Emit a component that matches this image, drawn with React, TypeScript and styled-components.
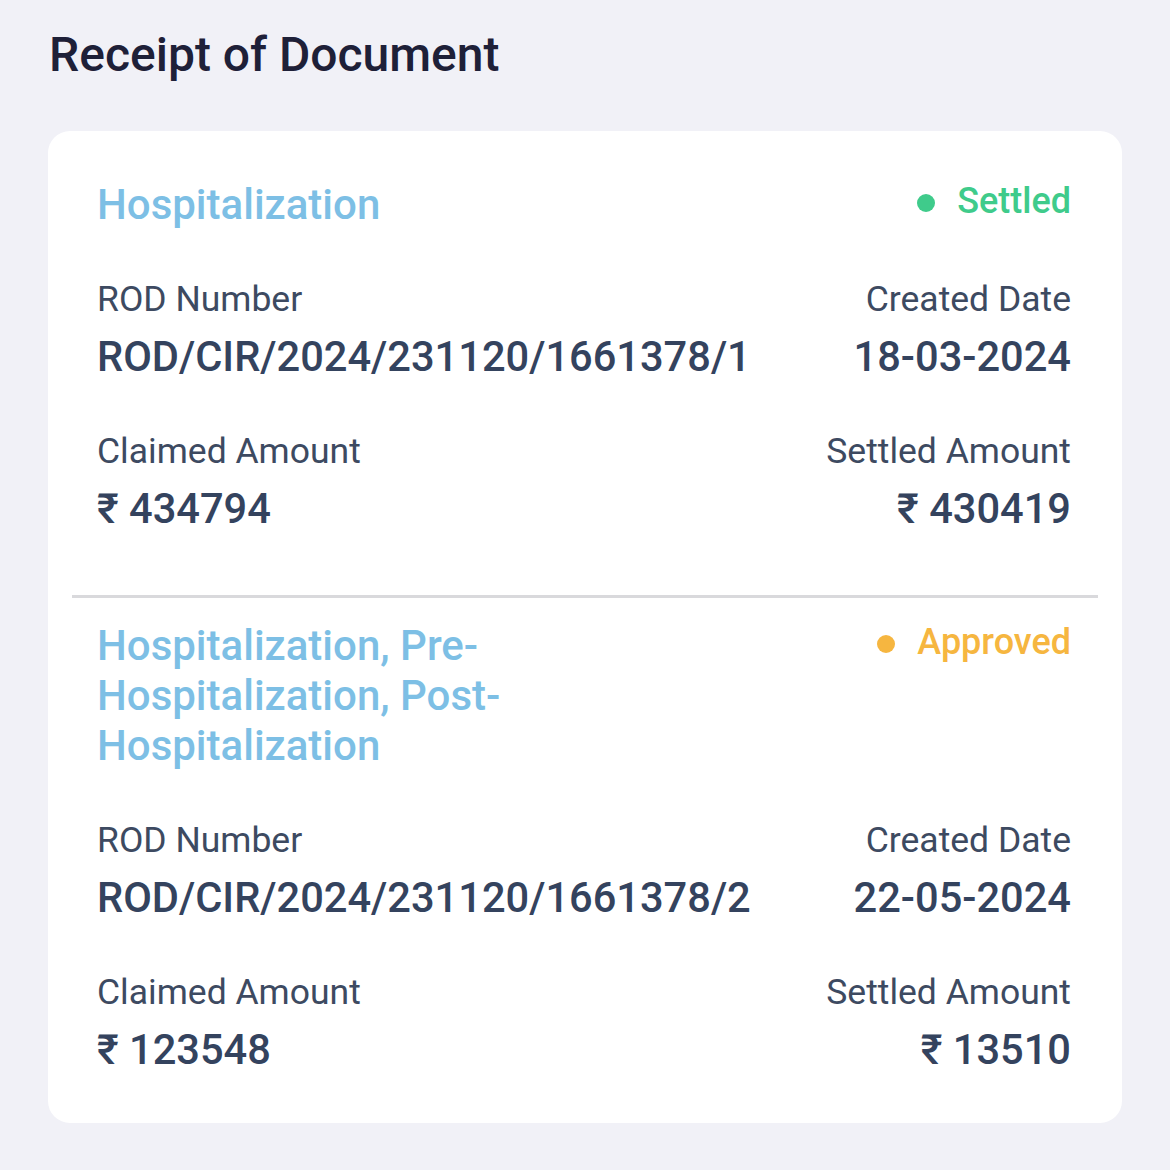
import React from "react";
import styled, { createGlobalStyle } from "styled-components";

interface Rod {
  category: string;
  status: "Settled" | "Approved";
  rodNumber: string;
  createdDate: string;
  claimedAmount: number;
  settledAmount: number;
}

const rods: Rod[] = [
  {
    category: "Hospitalization",
    status: "Settled",
    rodNumber: "ROD/CIR/2024/231120/1661378/1",
    createdDate: "18-03-2024",
    claimedAmount: 434794,
    settledAmount: 430419,
  },
  {
    category: "Hospitalization, Pre-Hospitalization, Post-Hospitalization",
    status: "Approved",
    rodNumber: "ROD/CIR/2024/231120/1661378/2",
    createdDate: "22-05-2024",
    claimedAmount: 123548,
    settledAmount: 13510,
  },
];

const statusColors: Record<Rod["status"], string> = {
  Settled: "#3fcb8b",
  Approved: "#f6b640",
};

const App: React.FC = () => {
  return (
    <>
      <GlobalStyle />
      <Page>
        <Heading>Receipt of Document</Heading>
        <Card>
          {rods.map((rod, i) => (
            <React.Fragment key={rod.rodNumber}>
              {i > 0 && <Divider />}
              <Item $first={i === 0}>
                <TopRow>
                  <Category>{rod.category}</Category>
                  <Status $color={statusColors[rod.status]}>
                    <Dot $color={statusColors[rod.status]} />
                    {rod.status}
                  </Status>
                </TopRow>
                <FieldRow>
                  <Field>
                    <Label>ROD Number</Label>
                    <Value>{rod.rodNumber}</Value>
                  </Field>
                  <Field $right>
                    <Label>Created Date</Label>
                    <Value>{rod.createdDate}</Value>
                  </Field>
                </FieldRow>
                <FieldRow>
                  <Field>
                    <Label>Claimed Amount</Label>
                    <Value>₹ {rod.claimedAmount}</Value>
                  </Field>
                  <Field $right>
                    <Label>Settled Amount</Label>
                    <Value>₹ {rod.settledAmount}</Value>
                  </Field>
                </FieldRow>
              </Item>
            </React.Fragment>
          ))}
        </Card>
      </Page>
    </>
  );
};

const GlobalStyle = createGlobalStyle`
  body {
    margin: 0;
    background: #f1f1f7;
    font-family: Roboto, "Noto Sans", "DejaVu Sans", sans-serif;
  }
`;

const Page = styled.div`
  padding: 26px 48px 40px;
`;

const Heading = styled.h1`
  margin: 0;
  font-size: 48px;
  line-height: 58px;
  font-weight: 500;
  color: #1e2038;
  padding-left: 1px;
`;

const Card = styled.div`
  margin-top: 47px;
  background: #ffffff;
  border-radius: 22px;
  padding: 24px 24px 48px;
`;

const Divider = styled.div`
  height: 3px;
  background: #d9d9dc;
`;

const Item = styled.div<{ $first?: boolean }>`
  padding: ${(p) => (p.$first ? "25px" : "23px")} 27px
    ${(p) => (p.$first ? "61px" : "0")} 25px;
`;

const TopRow = styled.div`
  display: flex;
  justify-content: space-between;
  align-items: flex-start;
  gap: 40px;
`;

const Category = styled.div`
  max-width: 430px;
  font-size: 42px;
  line-height: 50px;
  font-weight: 500;
  color: #7dbfe5;
`;

const Status = styled.div<{ $color: string }>`
  display: flex;
  align-items: center;
  gap: 22px;
  flex-shrink: 0;
  font-size: 36px;
  line-height: 42px;
  font-weight: 500;
  color: ${(p) => p.$color};
`;

const Dot = styled.span<{ $color: string }>`
  width: 18px;
  height: 18px;
  margin-top: 3px;
  border-radius: 50%;
  background: ${(p) => p.$color};
`;

const FieldRow = styled.div`
  display: flex;
  justify-content: space-between;
  margin-top: 48px;
`;

const Field = styled.div<{ $right?: boolean }>`
  display: flex;
  flex-direction: column;
  gap: 12px;
  align-items: ${(p) => (p.$right ? "flex-end" : "flex-start")};
`;

const Label = styled.div`
  font-size: 35.5px;
  line-height: 42px;
  color: #3d4a61;
`;

const Value = styled.div`
  font-size: 41.6px;
  line-height: 50px;
  font-weight: 500;
  color: #34435e;
`;

export default App;
